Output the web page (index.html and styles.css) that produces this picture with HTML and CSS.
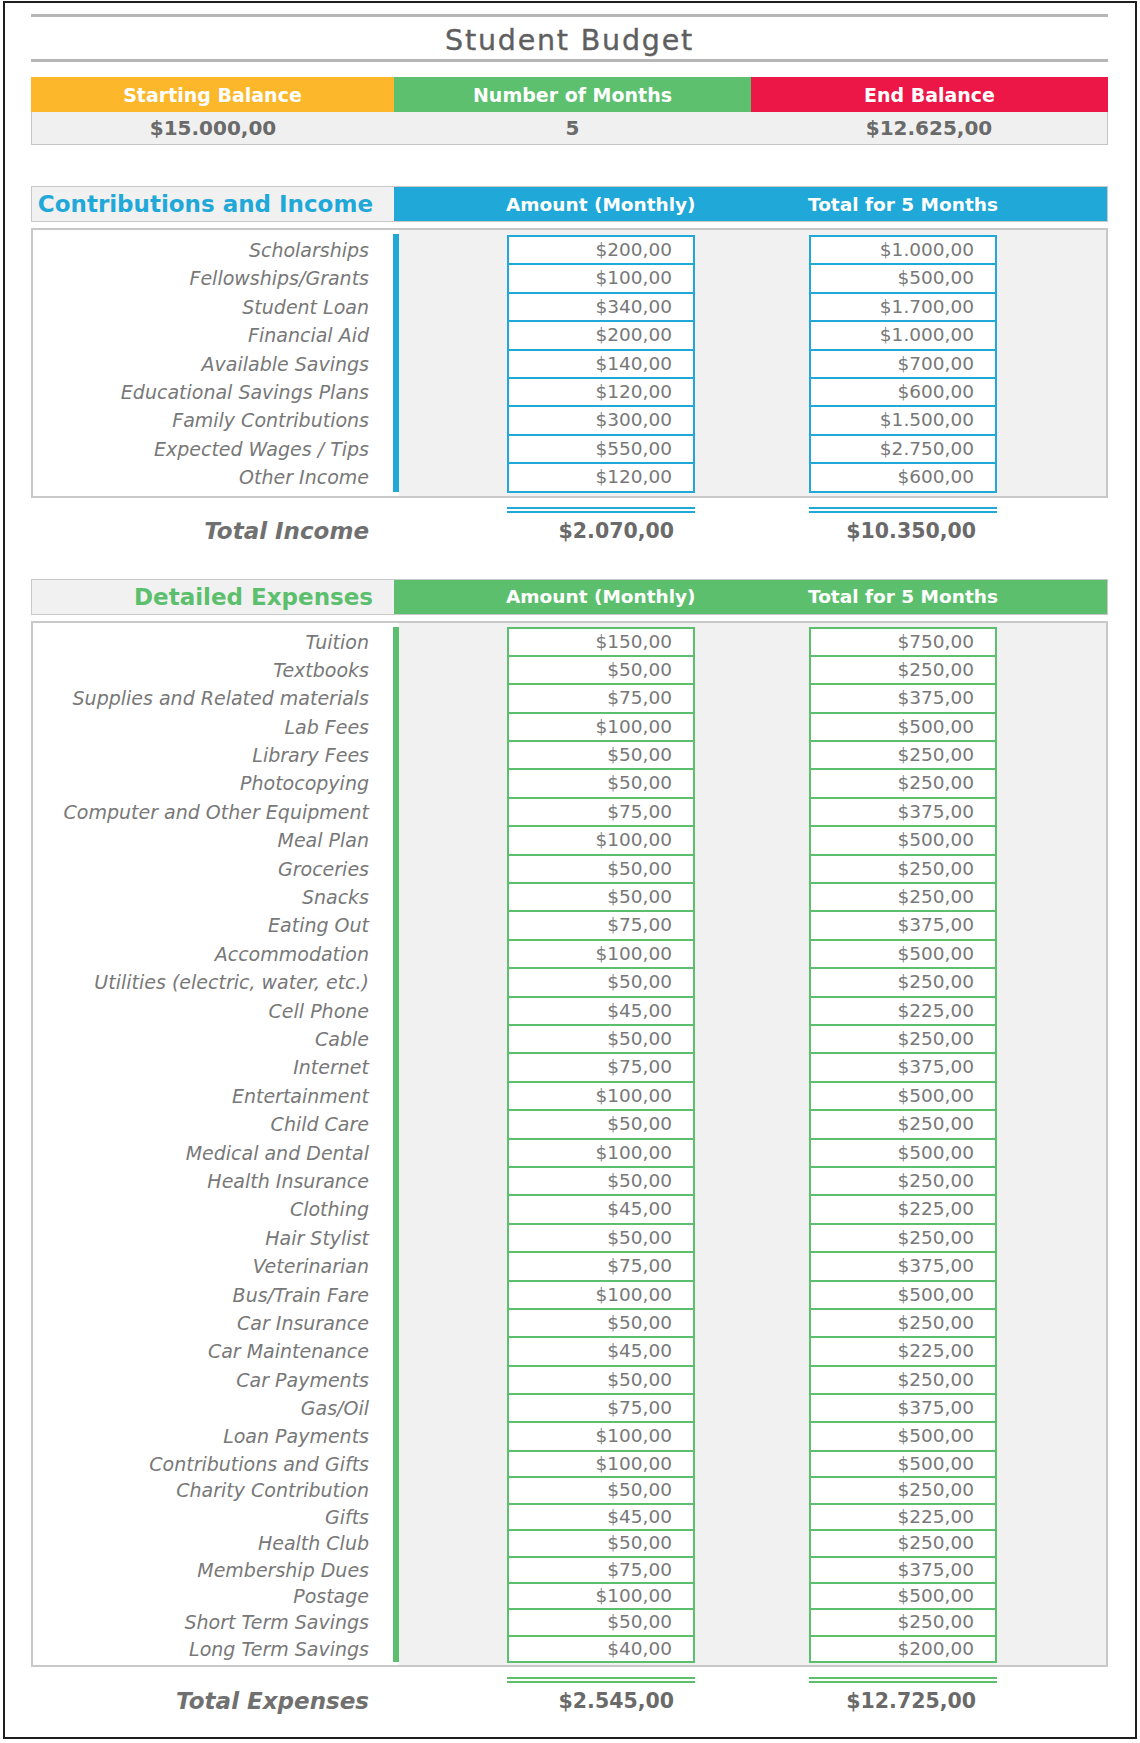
FILE: index.html
```html
<!DOCTYPE html>
<html lang="en">
<head>
<meta charset="utf-8">
<title>Student Budget</title>
<link rel="stylesheet" href="styles.css">
</head>
<body>
<div class="frame">
  <div class="rule top"></div>
  <div class="title">Student Budget</div>
  <div class="rule"></div>

  <div class="summary">
    <div class="h orange">Starting Balance</div>
    <div class="h green">Number of Months</div>
    <div class="h red">End Balance</div>
    <div class="v first">$15.000,00</div>
    <div class="v">5</div>
    <div class="v last">$12.625,00</div>
  </div>

  <div class="sec-head blue">
    <div class="sec-title">Contributions and Income</div>
    <div class="sec-bar"><span>Amount (Monthly)</span><span>Total for 5 Months</span></div>
  </div>
  <div class="sec-body blue income">
    <div class="labels">
      <div class="lbl">Scholarships</div>
      <div class="lbl">Fellowships/Grants</div>
      <div class="lbl">Student Loan</div>
      <div class="lbl">Financial Aid</div>
      <div class="lbl">Available Savings</div>
      <div class="lbl">Educational Savings Plans</div>
      <div class="lbl">Family Contributions</div>
      <div class="lbl">Expected Wages / Tips</div>
      <div class="lbl">Other Income</div>
    </div>
    <div class="barcol"></div>
    <div class="vals">
      <div class="col">
        <div class="cell">$200,00</div>
        <div class="cell">$100,00</div>
        <div class="cell">$340,00</div>
        <div class="cell">$200,00</div>
        <div class="cell">$140,00</div>
        <div class="cell">$120,00</div>
        <div class="cell">$300,00</div>
        <div class="cell">$550,00</div>
        <div class="cell">$120,00</div>
      </div>
      <div class="col">
        <div class="cell">$1.000,00</div>
        <div class="cell">$500,00</div>
        <div class="cell">$1.700,00</div>
        <div class="cell">$1.000,00</div>
        <div class="cell">$700,00</div>
        <div class="cell">$600,00</div>
        <div class="cell">$1.500,00</div>
        <div class="cell">$2.750,00</div>
        <div class="cell">$600,00</div>
      </div>
    </div>
  </div>
  <div class="total blue income">
    <div class="tl">Total Income</div>
    <div class="tv"><div class="dbl"></div><div class="amt">$2.070,00</div></div>
    <div class="tv"><div class="dbl"></div><div class="amt">$10.350,00</div></div>
  </div>

  <div class="sec-head green exp">
    <div class="sec-title">Detailed Expenses</div>
    <div class="sec-bar"><span>Amount (Monthly)</span><span>Total for 5 Months</span></div>
  </div>
  <div class="sec-body green exp">
    <div class="labels">
      <div class="lbl">Tuition</div>
      <div class="lbl">Textbooks</div>
      <div class="lbl">Supplies and Related materials</div>
      <div class="lbl">Lab Fees</div>
      <div class="lbl">Library Fees</div>
      <div class="lbl">Photocopying</div>
      <div class="lbl">Computer and Other Equipment</div>
      <div class="lbl">Meal Plan</div>
      <div class="lbl">Groceries</div>
      <div class="lbl">Snacks</div>
      <div class="lbl">Eating Out</div>
      <div class="lbl">Accommodation</div>
      <div class="lbl">Utilities (electric, water, etc.)</div>
      <div class="lbl">Cell Phone</div>
      <div class="lbl">Cable</div>
      <div class="lbl">Internet</div>
      <div class="lbl">Entertainment</div>
      <div class="lbl">Child Care</div>
      <div class="lbl">Medical and Dental</div>
      <div class="lbl">Health Insurance</div>
      <div class="lbl">Clothing</div>
      <div class="lbl">Hair Stylist</div>
      <div class="lbl">Veterinarian</div>
      <div class="lbl">Bus/Train Fare</div>
      <div class="lbl">Car Insurance</div>
      <div class="lbl">Car Maintenance</div>
      <div class="lbl">Car Payments</div>
      <div class="lbl">Gas/Oil</div>
      <div class="lbl">Loan Payments</div>
      <div class="lbl short">Contributions and Gifts</div>
      <div class="lbl short">Charity Contribution</div>
      <div class="lbl short">Gifts</div>
      <div class="lbl short">Health Club</div>
      <div class="lbl short">Membership Dues</div>
      <div class="lbl short">Postage</div>
      <div class="lbl short">Short Term Savings</div>
      <div class="lbl short">Long Term Savings</div>
    </div>
    <div class="barcol"></div>
    <div class="vals">
      <div class="col">
        <div class="cell">$150,00</div>
        <div class="cell">$50,00</div>
        <div class="cell">$75,00</div>
        <div class="cell">$100,00</div>
        <div class="cell">$50,00</div>
        <div class="cell">$50,00</div>
        <div class="cell">$75,00</div>
        <div class="cell">$100,00</div>
        <div class="cell">$50,00</div>
        <div class="cell">$50,00</div>
        <div class="cell">$75,00</div>
        <div class="cell">$100,00</div>
        <div class="cell">$50,00</div>
        <div class="cell">$45,00</div>
        <div class="cell">$50,00</div>
        <div class="cell">$75,00</div>
        <div class="cell">$100,00</div>
        <div class="cell">$50,00</div>
        <div class="cell">$100,00</div>
        <div class="cell">$50,00</div>
        <div class="cell">$45,00</div>
        <div class="cell">$50,00</div>
        <div class="cell">$75,00</div>
        <div class="cell">$100,00</div>
        <div class="cell">$50,00</div>
        <div class="cell">$45,00</div>
        <div class="cell">$50,00</div>
        <div class="cell">$75,00</div>
        <div class="cell">$100,00</div>
        <div class="cell short">$100,00</div>
        <div class="cell short">$50,00</div>
        <div class="cell short">$45,00</div>
        <div class="cell short">$50,00</div>
        <div class="cell short">$75,00</div>
        <div class="cell short">$100,00</div>
        <div class="cell short">$50,00</div>
        <div class="cell short">$40,00</div>
      </div>
      <div class="col">
        <div class="cell">$750,00</div>
        <div class="cell">$250,00</div>
        <div class="cell">$375,00</div>
        <div class="cell">$500,00</div>
        <div class="cell">$250,00</div>
        <div class="cell">$250,00</div>
        <div class="cell">$375,00</div>
        <div class="cell">$500,00</div>
        <div class="cell">$250,00</div>
        <div class="cell">$250,00</div>
        <div class="cell">$375,00</div>
        <div class="cell">$500,00</div>
        <div class="cell">$250,00</div>
        <div class="cell">$225,00</div>
        <div class="cell">$250,00</div>
        <div class="cell">$375,00</div>
        <div class="cell">$500,00</div>
        <div class="cell">$250,00</div>
        <div class="cell">$500,00</div>
        <div class="cell">$250,00</div>
        <div class="cell">$225,00</div>
        <div class="cell">$250,00</div>
        <div class="cell">$375,00</div>
        <div class="cell">$500,00</div>
        <div class="cell">$250,00</div>
        <div class="cell">$225,00</div>
        <div class="cell">$250,00</div>
        <div class="cell">$375,00</div>
        <div class="cell">$500,00</div>
        <div class="cell short">$500,00</div>
        <div class="cell short">$250,00</div>
        <div class="cell short">$225,00</div>
        <div class="cell short">$250,00</div>
        <div class="cell short">$375,00</div>
        <div class="cell short">$500,00</div>
        <div class="cell short">$250,00</div>
        <div class="cell short">$200,00</div>
      </div>
    </div>
  </div>
  <div class="total green exp">
    <div class="tl">Total Expenses</div>
    <div class="tv"><div class="dbl"></div><div class="amt">$2.545,00</div></div>
    <div class="tv"><div class="dbl"></div><div class="amt">$12.725,00</div></div>
  </div>
</div>
</body>
</html>
```

FILE: styles.css
```css
* { box-sizing: border-box; }
html, body { margin: 0; padding: 0; background: #fff; }
body {
  font-family: "DejaVu Sans", "Liberation Sans", sans-serif;
  color: #6d6d6d;
}

.frame {
  width: 1134px;
  height: 1738px;
  margin: 1px 0 0 3px;
  border: 2px solid #1e1e1e;
  padding: 0 27px 0 26px;
}

.rule { height: 3px; background: #b6b6b6; }
.rule.top { margin-top: 11px; }

.title {
  height: 42px;
  display: flex;
  align-items: center;
  justify-content: center;
  padding-top: 5px;
  font-size: 28.5px;
  letter-spacing: 1.8px;
  color: #5f5f5f;
  -webkit-text-stroke: 0.4px #5f5f5f;
  white-space: nowrap;
}

/* summary */
.summary {
  margin-top: 15px;
  display: grid;
  grid-template-columns: 363px 357px 357px;
}
.summary .h {
  height: 35px;
  display: flex;
  align-items: center;
  justify-content: center;
  color: #fff;
  font-weight: bold;
  font-size: 19px;
  white-space: nowrap;
}
.h.orange { background: #fcb72a; }
.h.green { background: #5cc06e; }
.h.red { background: #ec1647; }
.summary .v {
  height: 33px;
  background: #f0f0f0;
  border-bottom: 1px solid #c4c4c4;
  display: flex;
  align-items: center;
  justify-content: center;
  font-weight: bold;
  font-size: 20px;
  color: #6a6a6a;
}
.summary .v.first { border-left: 1px solid #c4c4c4; }
.summary .v.last { border-right: 1px solid #c4c4c4; }

/* section header */
.sec-head {
  margin-top: 41px;
  height: 36px;
  display: flex;
  border: 1px solid #c9c9c9;
}
.sec-head.exp { margin-top: 30px; }
.sec-title {
  width: 362px;
  background: #f1f1f1;
  display: flex;
  align-items: center;
  justify-content: flex-end;
  padding-right: 21px;
  font-weight: bold;
  font-size: 23px;
  white-space: nowrap;
}
.sec-bar {
  flex: 1;
  display: flex;
  align-items: center;
  gap: 114px;
  padding-left: 112px;
  color: #fff;
  font-weight: bold;
  font-size: 18.5px;
  white-space: nowrap;
}
.sec-bar span { width: 188px; text-align: center; }
.sec-head.blue .sec-title { color: #1fa8d8; }
.sec-head.blue .sec-bar { background: #1fa8d8; }
.sec-head.green .sec-title { color: #5cbf6d; }
.sec-head.green .sec-bar { background: #5cbf6d; }

/* section body */
.sec-body {
  margin-top: 6px;
  border: 2px solid #c8c8c8;
  display: flex;
}
.labels {
  width: 360px;
  background: #fff;
  padding: 5px 24px 3px 0;
  text-align: right;
}
.lbl {
  height: 28.4px;
  padding-top: 2px;
  line-height: 26.4px;
  font-style: italic;
  font-size: 19px;
  color: #787878;
  white-space: nowrap;
}
.lbl.short { height: 26.45px; line-height: 24.45px; }
.barcol {
  width: 6px;
  padding: 4px 0;
  background-clip: content-box;
}
.vals {
  flex: 1;
  background: #f1f1f1;
  display: flex;
  align-items: flex-start;
  gap: 114px;
  padding: 5px 0 3px 108px;
}
.col {
  width: 188px;
  border: 2px solid;
  border-top: none;
  background: #fff;
}
.cell {
  height: 28.4px;
  border-top: 2px solid;
  padding-right: 21px;
  text-align: right;
  line-height: 26.4px;
  font-size: 18.5px;
  color: #787878;
  white-space: nowrap;
}
.cell.short { height: 26.45px; line-height: 24.45px; }

.sec-body.blue .barcol { background-color: #1fa8d8; }
.sec-body.blue .col, .sec-body.blue .cell { border-color: #1fa8d8; }
.sec-body.green .barcol { background-color: #5cbf6d; }
.sec-body.green .col, .sec-body.green .cell { border-color: #5cbf6d; }

.sec-body.exp .labels { padding-top: 4px; padding-bottom: 2px; }
.sec-body.exp .vals { padding-top: 4px; padding-bottom: 2px; }
.sec-body.exp .barcol { padding: 4px 0 3px; }

/* totals */
.total { display: flex; margin-top: 9px; }
.total.exp { margin-top: 10px; }
.tl {
  width: 338px;
  padding-top: 6px;
  line-height: 36px;
  text-align: right;
  font-style: italic;
  font-weight: bold;
  font-size: 23px;
  color: #707070;
  white-space: nowrap;
}
.tv { width: 188px; margin-left: 138px; }
.tv + .tv { margin-left: 114px; }
.dbl { height: 6px; border-top: 2px solid; border-bottom: 2px solid; }
.total.blue .dbl { border-color: #1fa8d8; }
.total.green .dbl { border-color: #5cbf6d; }
.amt {
  line-height: 36px;
  text-align: right;
  padding-right: 21px;
  font-weight: bold;
  font-size: 20.5px;
  color: #6a6a6a;
  white-space: nowrap;
}
```
